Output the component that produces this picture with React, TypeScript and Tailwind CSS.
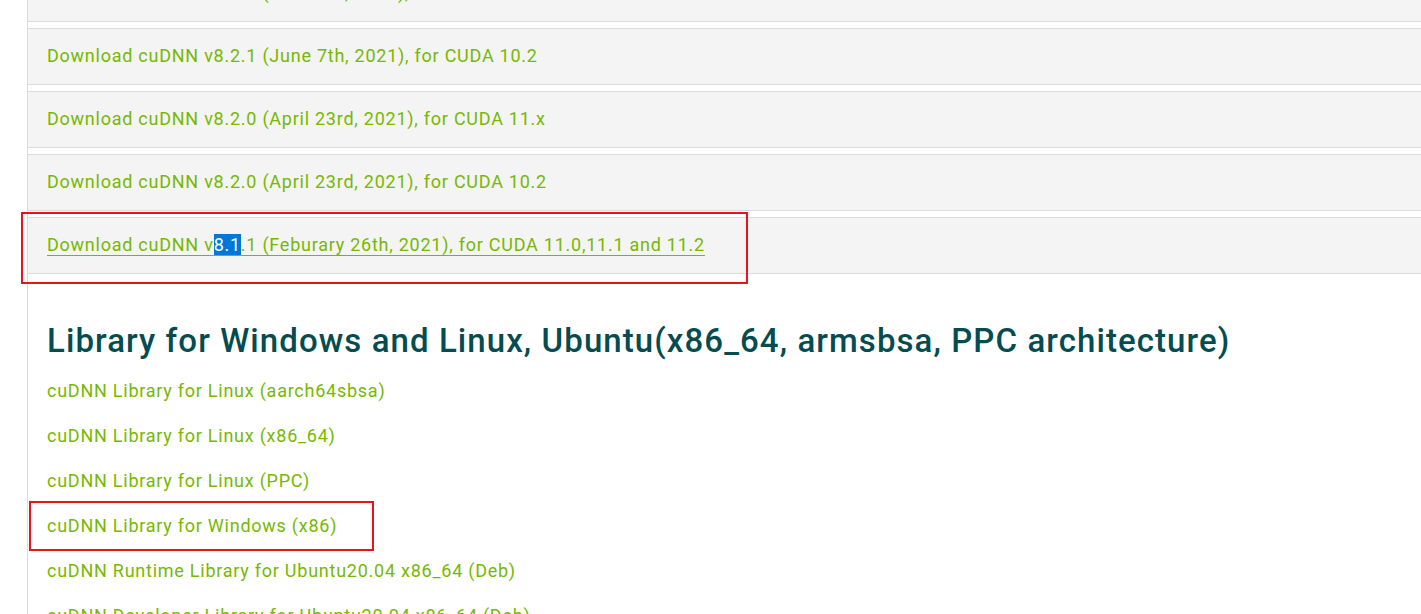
import React from "react";

const boxes = [
  "Download cuDNN v8.2.1 (June 7th, 2021), for CUDA 11.x",
  "Download cuDNN v8.2.1 (June 7th, 2021), for CUDA 10.2",
  "Download cuDNN v8.2.0 (April 23rd, 2021), for CUDA 11.x",
  "Download cuDNN v8.2.0 (April 23rd, 2021), for CUDA 10.2",
];

const links = [
  "cuDNN Library for Linux (aarch64sbsa)",
  "cuDNN Library for Linux (x86_64)",
  "cuDNN Library for Linux (PPC)",
  "cuDNN Library for Windows (x86)",
  "cuDNN Runtime Library for Ubuntu20.04 x86_64 (Deb)",
  "cuDNN Developer Library for Ubuntu20.04 x86_64 (Deb)",
];

export default function App() {
  return (
    <div
      className="relative w-[1421px] h-[614px] overflow-hidden bg-white"
      style={{ fontFamily: "Roboto, 'Liberation Sans', sans-serif" }}
    >
      <div className="ml-[27px] w-[1500px] -mt-[35px] border-l border-[#dcdcdc] min-h-[700px]">
        <div className="flex flex-col gap-[6px]">
          {boxes.map((t, i) => (
            <div
              key={i}
              className="h-[57px] flex items-center border border-[#dcdcdc] -ml-px bg-[#f4f4f4] pl-[19px] pb-[2px] text-[18px] tracking-[0.75px] text-[#76b900]"
            >
              {t}
            </div>
          ))}
          <div className="h-[57px] flex items-center border border-[#dcdcdc] -ml-px bg-[#f4f4f4] pl-[19px] pb-[2px] text-[18px] tracking-[0.75px] text-[#76b900]">
            <span className="underline underline-offset-[4px] decoration-[#76b900]">
              Download cuDNN v<span className="bg-[#0078d7] text-white">8.1</span>.1 (Feburary 26th, 2021), for CUDA 11.0,11.1 and 11.2
            </span>
          </div>
        </div>
        <h2 className="pl-[19px] mt-[47px] text-[33px] leading-[40px] font-medium tracking-[1.08px] text-[#044c4f]">
          Library for Windows and Linux, Ubuntu(x86_64, armsbsa, PPC architecture)
        </h2>
        <div className="pl-[19px] mt-[7px] flex flex-col">
          {links.map((l, i) => (
            <div key={i} className="h-[45px] flex items-center text-[18px] tracking-[0.75px] text-[#76b900]">
              {l}
            </div>
          ))}
        </div>
      </div>
      <div className="absolute left-[21px] top-[212px] w-[727px] h-[72px] border-2 border-[#e8141c]" />
      <div className="absolute left-[29px] top-[501px] w-[345px] h-[50px] border-2 border-[#e8141c]" />
    </div>
  );
}
